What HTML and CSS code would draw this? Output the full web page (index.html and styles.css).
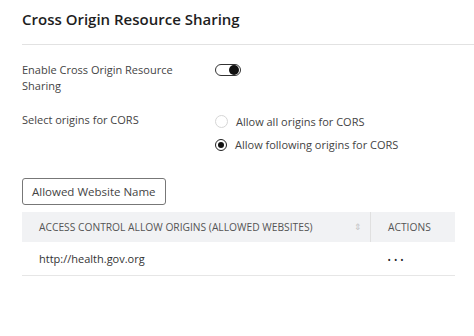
FILE: index.html
```html
<!DOCTYPE html>
<html lang="en">
<head>
    <meta charset="UTF-8">
    <meta name="viewport" content="width=device-width, initial-scale=1.0">
    <title>Cross Origin Resource Sharing</title>
    <link rel="stylesheet" href="styles.css">
</head>
<body>
    <header class="page-header">
        <h1>Cross Origin Resource Sharing</h1>
    </header>

    <div class="content">
        <div class="field">
            <label class="field-label">Enable Cross Origin Resource Sharing</label>
            <span class="toggle"><span class="knob"></span></span>
        </div>

        <div class="field">
            <label class="field-label">Select origins for CORS</label>
            <div class="radios">
                <label class="radio"><span class="dot"></span>Allow all origins for CORS</label>
                <label class="radio checked"><span class="dot"></span>Allow following origins for CORS</label>
            </div>
        </div>

        <button class="btn">Allowed Website Name</button>

        <table class="origins">
            <thead>
                <tr>
                    <th class="col-origin">Access Control Allow Origins (Allowed Websites)<span class="sort">&#8661;</span></th>
                    <th class="col-actions">Actions</th>
                </tr>
            </thead>
            <tbody>
                <tr>
                    <td>http://health.gov.org</td>
                    <td class="col-actions"><span class="more">&bull;&bull;&bull;</span></td>
                </tr>
            </tbody>
        </table>
    </div>
</body>
</html>
```

FILE: styles.css
```css
body, html {
    margin: 0;
    padding: 0;
    font-family: "Open Sans", sans-serif;
    color: #333;
    background: #fff;
}

.page-header {
    margin-left: 22px;
    height: 45px;
    border-bottom: 1px solid #e2e2e2;
    box-sizing: border-box;
}

h1 {
    margin: 0;
    padding-top: 9px;
    font-size: 15px;
    font-weight: 600;
    color: #1e1e1e;
}

.content {
    padding: 17px 19px 0 22px;
}

.field {
    display: flex;
    align-items: flex-start;
    font-size: 11px;
    line-height: 16px;
    color: #444;
    margin-bottom: 18px;
}

.field-label {
    width: 160px;
    margin-right: 33px;
}

.toggle {
    position: relative;
    display: inline-block;
    width: 24px;
    height: 10px;
    margin-top: 2px;
    border: 1.5px solid #333;
    border-radius: 8px;
}

.knob {
    position: absolute;
    right: 1px;
    top: 0;
    width: 10px;
    height: 10px;
    border-radius: 50%;
    background: #111;
}

.radios {
    margin-top: -2px;
}

.radio {
    display: flex;
    align-items: center;
    height: 23px;
}

.dot {
    width: 11px;
    height: 11px;
    border: 1px solid #d6d6d6;
    border-radius: 50%;
    margin-right: 8px;
    box-sizing: content-box;
    position: relative;
}

.checked .dot {
    border: 1.5px solid #222;
    width: 10px;
    height: 10px;
}

.checked .dot::after {
    content: "";
    position: absolute;
    left: 2px;
    top: 2px;
    width: 6px;
    height: 6px;
    border-radius: 50%;
    background: #111;
}

.btn {
    display: block;
    margin-top: 22px;
    height: 27px;
    padding: 0 9px;
    font-family: inherit;
    font-size: 11.5px;
    color: #444;
    background: #fff;
    border: 1px solid #777;
    border-radius: 3px;
}

.origins {
    margin-top: 7px;
    width: 433px;
    border-collapse: collapse;
    font-size: 11px;
    color: #333;
}

.origins th {
    background: #f1f2f4;
    height: 30px;
    text-align: left;
    font-weight: 400;
    font-size: 10.25px;
    text-transform: uppercase;
    color: #555;
    padding: 0 0 0 17px;
}

.col-origin {
    position: relative;
}

.sort {
    position: absolute;
    right: 8px;
    top: 8px;
    font-size: 9px;
    color: #c4c4c4;
}

.origins th.col-actions {
    border-left: 1px solid #e0e0e0;
    width: 67px;
}

.origins td {
    height: 33px;
    padding: 0 0 0 17px;
    border-bottom: 1px solid #e6e6e6;
}

.more {
    font-size: 9px;
    letter-spacing: 3px;
    color: #222;
}
```
